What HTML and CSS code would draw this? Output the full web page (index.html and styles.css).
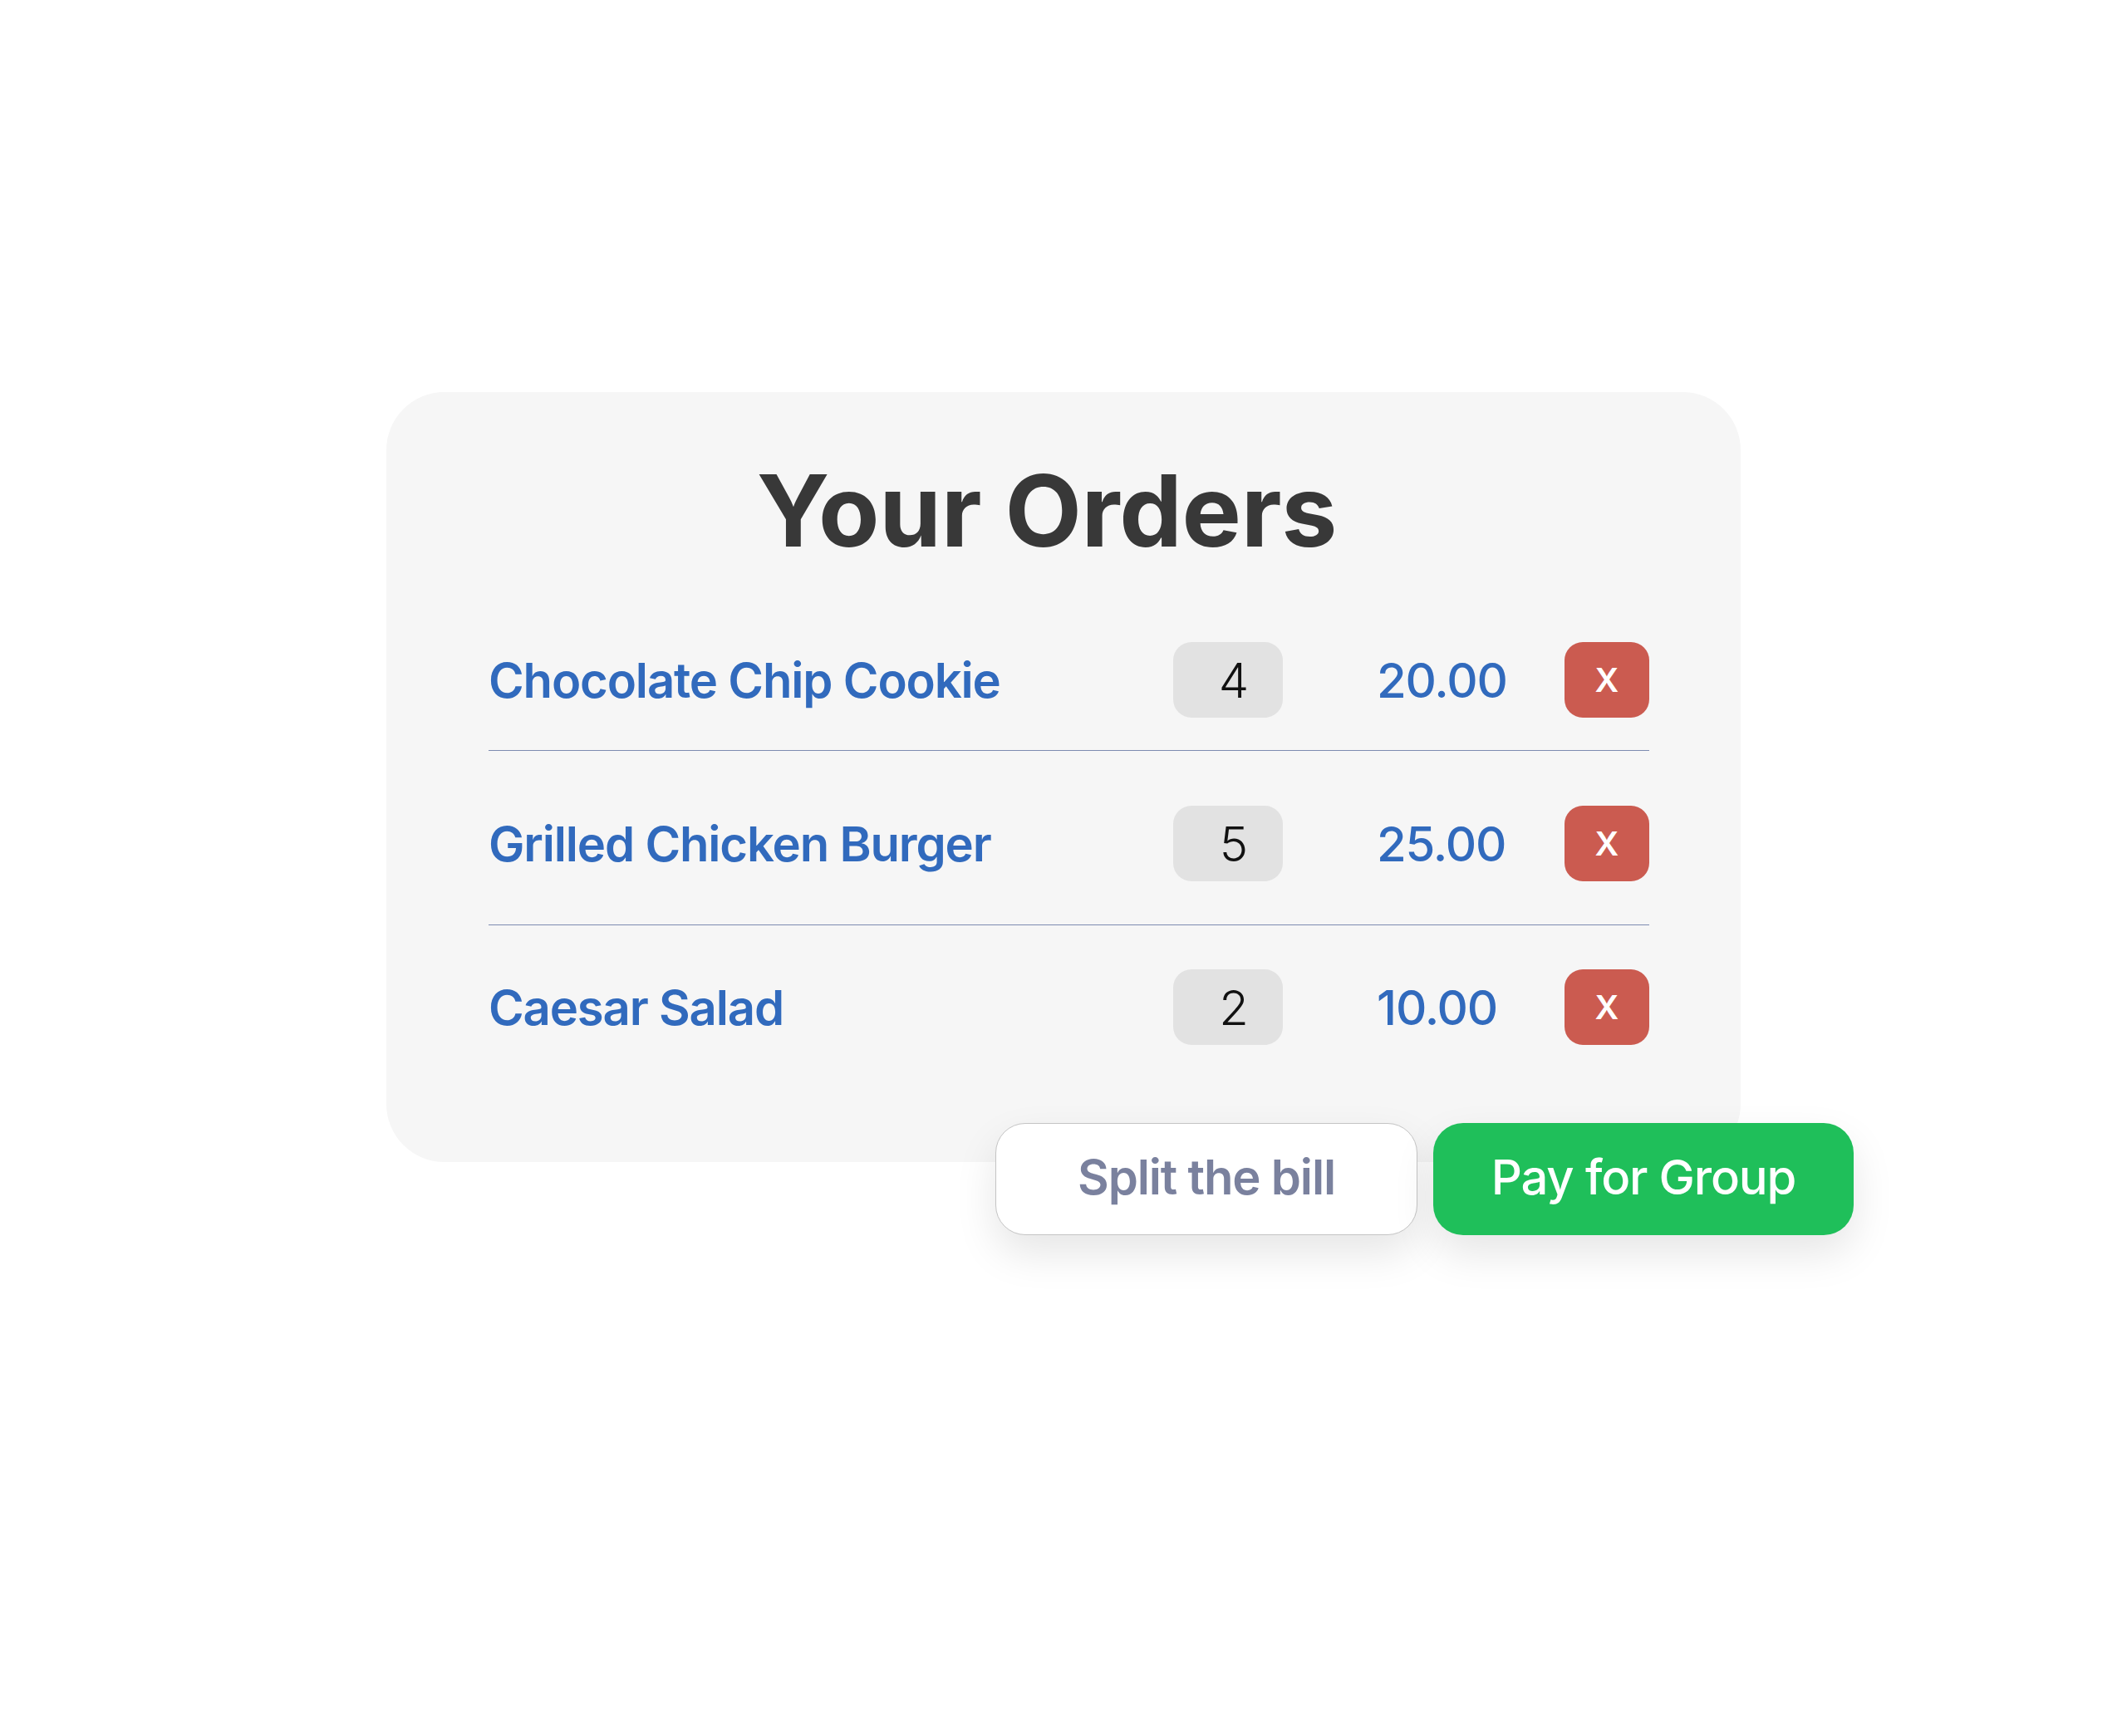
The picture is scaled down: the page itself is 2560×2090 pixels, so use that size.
FILE: index.html
```html
<!DOCTYPE html>
<html lang="en">
<head>
<meta charset="utf-8">
<title>Your Orders</title>
<link rel="stylesheet" href="styles.css">
</head>
<body>
<main class="page">
  <div class="wrap">
    <section class="card">
      <h1 class="title">Your Orders</h1>
      <div class="list">
        <div class="row">
          <span class="name">Chocolate Chip Cookie</span>
          <span class="qty">4</span>
          <span class="price">20.00</span>
          <button class="remove">X</button>
        </div>
        <hr class="divider divider-first">
        <div class="row">
          <span class="name">Grilled Chicken Burger</span>
          <span class="qty">5</span>
          <span class="price">25.00</span>
          <button class="remove">X</button>
        </div>
        <hr class="divider divider-second">
        <div class="row">
          <span class="name">Caesar Salad</span>
          <span class="qty">2</span>
          <span class="price">10.00</span>
          <button class="remove">X</button>
        </div>
      </div>
    </section>
    <div class="actions">
      <button class="btn btn-split">Split the bill</button>
      <button class="btn btn-pay">Pay for Group</button>
    </div>
  </div>
</main>
</body>
</html>
```
FILE: styles.css
```css
* { box-sizing: border-box; }

html, body {
  margin: 0;
  padding: 0;
  background: #ffffff;
  font-family: Inter, "Noto Sans", "Liberation Sans", sans-serif;
}

.page {
  width: 2560px;
  height: 2090px;
  padding-top: 472px;
  display: flex;
  justify-content: center;
}

.wrap {
  width: 1630px;
  display: flex;
  flex-direction: column;
}

.card {
  background: #f6f6f6;
  border-radius: 70px;
  padding: 70px 110px 142px 123px;
  height: 927px;
}

.title {
  margin: 0;
  font-size: 120px;
  font-weight: 700;
  line-height: 1.21;
  color: #383838;
  text-align: center;
  padding-right: 53px;
  letter-spacing: -0.3px;
}

.list {
  margin-top: 86px;
}

.row {
  display: grid;
  grid-template-columns: 1fr 132px 339px 102px;
  align-items: center;
  height: 91px;
}

.name {
  font-size: 58px;
  font-weight: 600;
  color: #316abd;
  white-space: nowrap;
  letter-spacing: -0.02em;
}

.qty {
  height: 91px;
  border-radius: 22px;
  background: #e2e2e2;
  display: flex;
  align-items: center;
  justify-content: center;
  padding-left: 14px;
  font-size: 58px;
  font-weight: 300;
  color: #111111;
}

.price {
  padding-left: 113px;
  font-size: 58px;
  font-weight: 500;
  color: #316abd;
  letter-spacing: -0.02em;
}

.remove {
  height: 91px;
  width: 102px;
  border: none;
  border-radius: 22px;
  background: #cb5b50;
  color: #ffffff;
  font-family: inherit;
  font-size: 40px;
  font-weight: 600;
  padding: 0;
}

.divider {
  border: none;
  border-top: 1.5px solid #7d8bb0;
  margin: 0;
}

.divider-first {
  margin-top: 39px;
  margin-bottom: 66px;
}

.divider-second {
  margin-top: 52px;
  margin-bottom: 53px;
}

.actions {
  display: flex;
  gap: 19px;
  margin-top: -47px;
  margin-left: 733px;
  margin-right: -136px;
}

.btn {
  flex: 1;
  height: 135px;
  border-radius: 36px;
  font-family: inherit;
  font-size: 58px;
  letter-spacing: -0.02em;
  box-shadow: 0 22px 50px rgba(0, 0, 0, 0.10);
  padding: 0 0 6px 0;
}

.btn-split {
  background: #ffffff;
  border: 1.5px solid #c4c4c4;
  color: #7a819e;
  font-weight: 600;
}

.btn-pay {
  background: #1fbf5a;
  border: none;
  color: #ffffff;
  font-weight: 500;
}
```
